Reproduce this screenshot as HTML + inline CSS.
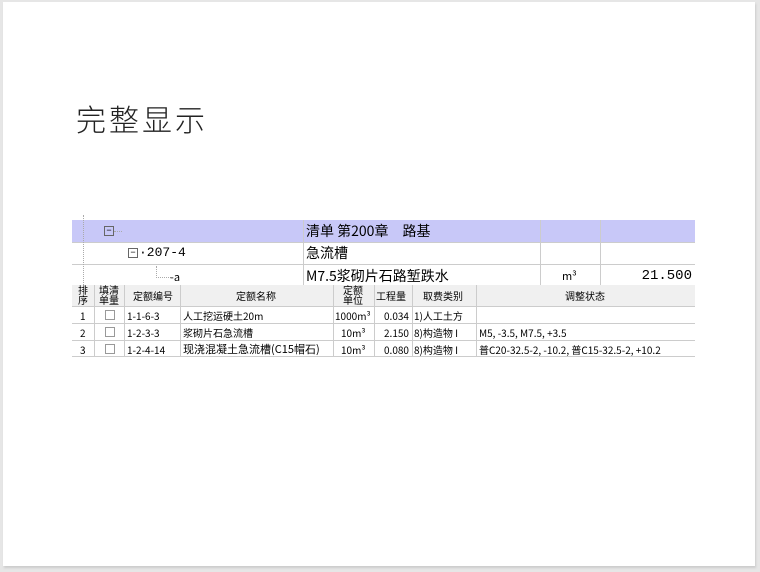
<!DOCTYPE html>
<html><head><meta charset="utf-8"><style>
body{margin:0;width:760px;height:572px;background:#e6e6e6;position:relative;overflow:hidden;font-family:"Liberation Sans","Noto Sans CJK SC",sans-serif}
.slide{position:absolute;left:3px;top:2px;width:752px;height:564px;background:#fff;box-shadow:1px 2px 2px #ccc}
.t{position:absolute;left:76px;top:100px;font-size:30px;line-height:36px;letter-spacing:3px;color:#222;font-family:"Noto Sans CJK SC",sans-serif;font-weight:300}
.a{position:absolute;font-size:13px;line-height:16px;height:16px;color:#000;white-space:nowrap;font-family:"Noto Sans CJK SC",sans-serif}
.l{position:absolute;background:#ccc}
.s{font-size:10px;line-height:11px;position:absolute;white-space:nowrap;color:#000;font-family:"Noto Sans CJK SC",sans-serif}
.hd{position:absolute;background:#f0f0f0}
.cb{position:absolute;width:8px;height:8px;border:1px solid #999;background:#fff}
</style></head><body><div class="slide"></div>
<div class="t">完整显示</div>
<div style="position:absolute;left:72px;top:220px;width:623px;height:22px;background:#c8c8f8"></div>
<div class="l" style="left:72px;top:242px;width:623px;height:1px"></div>
<div class="l" style="left:72px;top:264px;width:623px;height:1px"></div>
<div class="l" style="left:303px;top:220px;width:1px;height:65px"></div>
<div class="l" style="left:540px;top:220px;width:1px;height:65px"></div>
<div class="l" style="left:600px;top:220px;width:1px;height:65px"></div>
<div style="position:absolute;left:83px;top:215px;height:70px;border-left:1px dotted #aaa"></div>
<div style="position:absolute;left:104px;top:226px;width:8px;height:8px;border:1px solid #666;font-size:9px;line-height:7px;text-align:center">−</div>
<div style="position:absolute;left:114px;top:231px;width:8px;border-top:1px dotted #aaa"></div>
<div style="position:absolute;left:128px;top:248px;width:8px;height:8px;border:1px solid #666;font-size:9px;line-height:7px;text-align:center">−</div>
<div class="a" style="left:139px;top:245px;font-family:'Liberation Mono',monospace">·207-4</div>
<div style="position:absolute;left:156px;top:266px;height:11px;width:14px;border-left:1px dotted #aaa;border-bottom:1px dotted #aaa"></div>
<div class="a" style="left:170px;top:269px;font-size:11px">-a</div>
<div class="a" style="left:306px;top:223px;font-size:14px">清单 第200章　路基</div>
<div class="a" style="left:306px;top:245px;font-size:14px">急流槽</div>
<div class="a" style="left:306px;top:268px;font-size:14px">M7.5浆砌片石路堑跌水</div>
<div class="a" style="left:562px;top:268px;font-size:11px">m³</div>
<div class="a" style="left:630px;top:268px;width:62px;text-align:right;font-size:14px;font-family:'Liberation Mono',monospace">21.500</div>
<div class="hd" style="left:72px;top:285px;width:623px;height:21px"></div>
<div class="l" style="left:72px;top:306px;width:623px;height:1px"></div>
<div class="l" style="left:72px;top:323px;width:623px;height:1px"></div>
<div class="l" style="left:72px;top:340px;width:623px;height:1px"></div>
<div class="l" style="left:72px;top:356px;width:623px;height:1px"></div>
<div class="l" style="left:94px;top:285px;width:1px;height:71px"></div>
<div class="l" style="left:124px;top:285px;width:1px;height:71px"></div>
<div class="l" style="left:180px;top:285px;width:1px;height:71px"></div>
<div class="l" style="left:333px;top:285px;width:1px;height:71px"></div>
<div class="l" style="left:374px;top:285px;width:1px;height:71px"></div>
<div class="l" style="left:412px;top:285px;width:1px;height:71px"></div>
<div class="l" style="left:476px;top:285px;width:1px;height:71px"></div>
<div class="s" style="left:78px;top:285px;line-height:10px">排<br>序</div>
<div class="s" style="left:99px;top:285px;line-height:10px">填清<br>单量</div>
<div class="s" style="left:133px;top:290px">定额编号</div>
<div class="s" style="left:236px;top:290px">定额名称</div>
<div class="s" style="left:343px;top:285px;line-height:10px;text-align:center">定额<br>单位</div>
<div class="s" style="left:376px;top:290px">工程量</div>
<div class="s" style="left:423px;top:290px">取费类别</div>
<div class="s" style="left:565px;top:290px">调整状态</div>
<div class="s" style="left:80px;top:310px">1</div><div class="s" style="left:80px;top:327px">2</div><div class="s" style="left:80px;top:344px">3</div>
<div class="cb" style="left:105px;top:310px"></div><div class="cb" style="left:105px;top:327px"></div><div class="cb" style="left:105px;top:344px"></div>
<div class="s" style="left:127px;top:310px">1-1-6-3</div><div class="s" style="left:127px;top:327px">1-2-3-3</div><div class="s" style="left:127px;top:344px">1-2-4-14</div>
<div class="s" style="left:183px;top:310px">人工挖运硬土20m</div><div class="s" style="left:183px;top:327px">浆砌片石急流槽</div><div class="s" style="left:183px;top:344px;font-size:11px">现浇混凝土急流槽(C15帽石)</div>
<div class="s" style="left:335px;top:310px">1000m³</div><div class="s" style="left:341px;top:327px">10m³</div><div class="s" style="left:341px;top:344px">10m³</div>
<div class="s" style="left:384px;top:310px">0.034</div><div class="s" style="left:384px;top:327px">2.150</div><div class="s" style="left:384px;top:344px">0.080</div>
<div class="s" style="left:414px;top:310px">1)人工土方</div><div class="s" style="left:414px;top:327px">8)构造物 I</div><div class="s" style="left:414px;top:344px">8)构造物 I</div>
<div class="s" style="left:479px;top:327px">M5, -3.5, M7.5, +3.5</div>
<div class="s" style="left:479px;top:344px">普C20-32.5-2, -10.2, 普C15-32.5-2, +10.2</div>
</body></html>
